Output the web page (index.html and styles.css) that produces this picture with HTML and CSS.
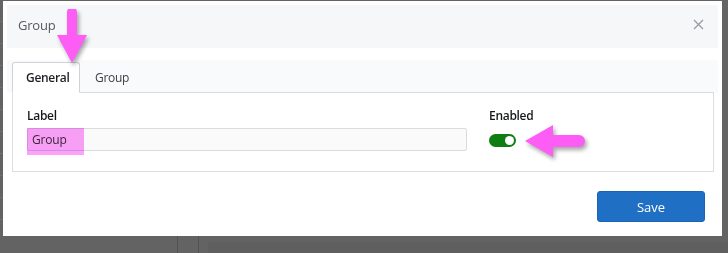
FILE: index.html
```html
<!DOCTYPE html>
<html>
<head>
    <title>Group</title>
    <link rel="stylesheet" href="styles.css">
</head>
<body>

<div class="side-left"></div>

<div class="modal">
    <div class="modal-header">
        <span class="modal-title">Group</span>
        <svg class="close-icon" width="11" height="11" viewBox="0 0 11 11">
            <path d="M1 1 L10 10 M10 1 L1 10" stroke="#9a9ea3" stroke-width="1.4" fill="none"/>
        </svg>
    </div>

    <div class="modal-body">
        <div class="tabs-bar">
            <ul class="tabs">
                <li class="tab active">General</li>
                <li class="tab">Group</li>
            </ul>
        </div>

        <div class="tab-panel">
            <div class="field field-label">
                <label for="labelInput">Label</label>
                <div class="input-wrap">
                    <input id="labelInput" class="text-input" type="text" value="Group">
                    <span class="marker"></span>
                </div>
            </div>
            <div class="field field-enabled">
                <label>Enabled</label>
                <span class="toggle"><span class="knob"></span></span>
            </div>
        </div>
    </div>

    <div class="modal-footer">
        <button class="btn-save">Save</button>
    </div>
</div>

<div class="backdrop-row">
    <div class="cell cell-a"></div>
    <div class="cell cell-b"></div>
    <div class="cell cell-c"></div>
</div>

<!-- annotation arrows -->
<svg class="arrow arrow-down" width="40" height="60" viewBox="0 0 40 60">
    <path d="M10 3 A5 5 0 0 1 20 3 L20 26 L30 26 L15 54 L0 26 L10 26 Z" fill="#fd5cf5"/>
</svg>
<svg class="arrow arrow-left" width="64" height="36" viewBox="0 0 64 36">
    <path d="M2 16 L30 0 L30 10 L56 10 A6 6 0 0 1 56 22 L30 22 L30 32 Z" fill="#fd5cf5"/>
</svg>

</body>
</html>
```

FILE: styles.css
```css
body {
    margin: 0;
    width: 728px;
    height: 253px;
    overflow: hidden;
    background: #636363;
    font-family: "Open Sans", "Liberation Sans", sans-serif;
    position: relative;
}

.side-left {
    position: absolute;
    left: 0;
    top: 0;
    width: 3px;
    height: 236px;
    background: repeating-linear-gradient(#636363 0, #636363 21px, #707070 21px, #707070 22px);
}

.modal {
    margin: 1px 0 0 3px;
    width: 719px;
    height: 235px;
    box-sizing: border-box;
    padding: 4px;
    background: #fff;
    display: flex;
    flex-direction: column;
}

.modal-header {
    height: 43px;
    flex-shrink: 0;
    background: #f6f7f9;
    display: flex;
    align-items: center;
    justify-content: space-between;
    padding: 0 14px 4px 11px;
    box-sizing: border-box;
}

.modal-title {
    font-size: 13px;
    letter-spacing: -0.2px;
    color: #555a60;
}

.modal-body {
    padding: 14px 4px 0 5px;
}

.tabs-bar {
    margin: -2px -4px 0 -5px;
    padding: 2px 4px 0 5px;
    background: #f9fafb;
}

.tabs {
    list-style: none;
    margin: 0;
    padding: 0;
    display: flex;
    border-bottom: 1px solid #d6d9dd;
    height: 30px;
}

.tab {
    box-sizing: border-box;
    height: 31px;
    display: flex;
    align-items: center;
    padding-left: 15px;
    font-size: 12px;
    letter-spacing: -0.3px;
    color: #3c4046;
}

.tab.active {
    width: 68px;
    padding-left: 13px;
    border: 1px solid #cfd3d7;
    border-bottom-color: #fff;
    border-radius: 3px 3px 0 0;
    background: #fff;
    font-weight: 600;
    color: #1c1f23;
}

.tab-panel {
    border: 1px solid #dcdfe2;
    border-top: none;
    height: 79px;
    box-sizing: border-box;
    padding: 15px 0 0 14px;
    display: flex;
    gap: 22px;
}

.field label {
    display: block;
    font-size: 12px;
    line-height: 16px;
    font-weight: 600;
    letter-spacing: -0.3px;
    color: #16191c;
}

.field-label {
    width: 440px;
}

.input-wrap {
    position: relative;
    margin-top: 4px;
}

.text-input {
    display: block;
    width: 100%;
    height: 23px;
    box-sizing: border-box;
    border: 1px solid #d9dcdf;
    border-radius: 2px;
    background: #fafafa;
    padding: 0 4px;
    font-family: "Open Sans", "Liberation Sans", sans-serif;
    font-size: 12px;
    letter-spacing: -0.2px;
    color: #3a3a3a;
    outline: none;
}

.marker {
    position: absolute;
    left: 0;
    top: 0;
    width: 57px;
    height: 27px;
    background: #fca2fa;
    mix-blend-mode: multiply;
}

.toggle {
    display: block;
    margin-top: 10px;
    width: 27px;
    height: 13px;
    border-radius: 7px;
    background: #0e7d12;
    position: relative;
}

.knob {
    position: absolute;
    right: 2px;
    top: 2px;
    width: 9px;
    height: 9px;
    border-radius: 50%;
    background: #fff;
}

.modal-footer {
    display: flex;
    justify-content: flex-end;
    padding: 19px 13px 0 0;
}

.btn-save {
    width: 108px;
    height: 31px;
    border: 1px solid #1b64b3;
    border-radius: 3px;
    background: #1f6fc4;
    color: #fff;
    font-family: "Open Sans", "Liberation Sans", sans-serif;
    font-size: 13px;
}

.backdrop-row {
    display: flex;
    height: 17px;
}

.cell-a {
    width: 177px;
    border-right: 1px solid #50545a;
}

.cell-b {
    width: 20px;
    border-right: 1px solid #50545a;
}

.cell-c {
    flex: 1;
    margin: 6px 0 0 9px;
    background: #5f5f5f;
}

.arrow {
    position: absolute;
    filter: drop-shadow(2px 3px 2px rgba(0, 0, 0, 0.35));
}

.arrow-down {
    left: 57px;
    top: 9px;
}

.arrow-left {
    left: 523px;
    top: 125px;
}
```
